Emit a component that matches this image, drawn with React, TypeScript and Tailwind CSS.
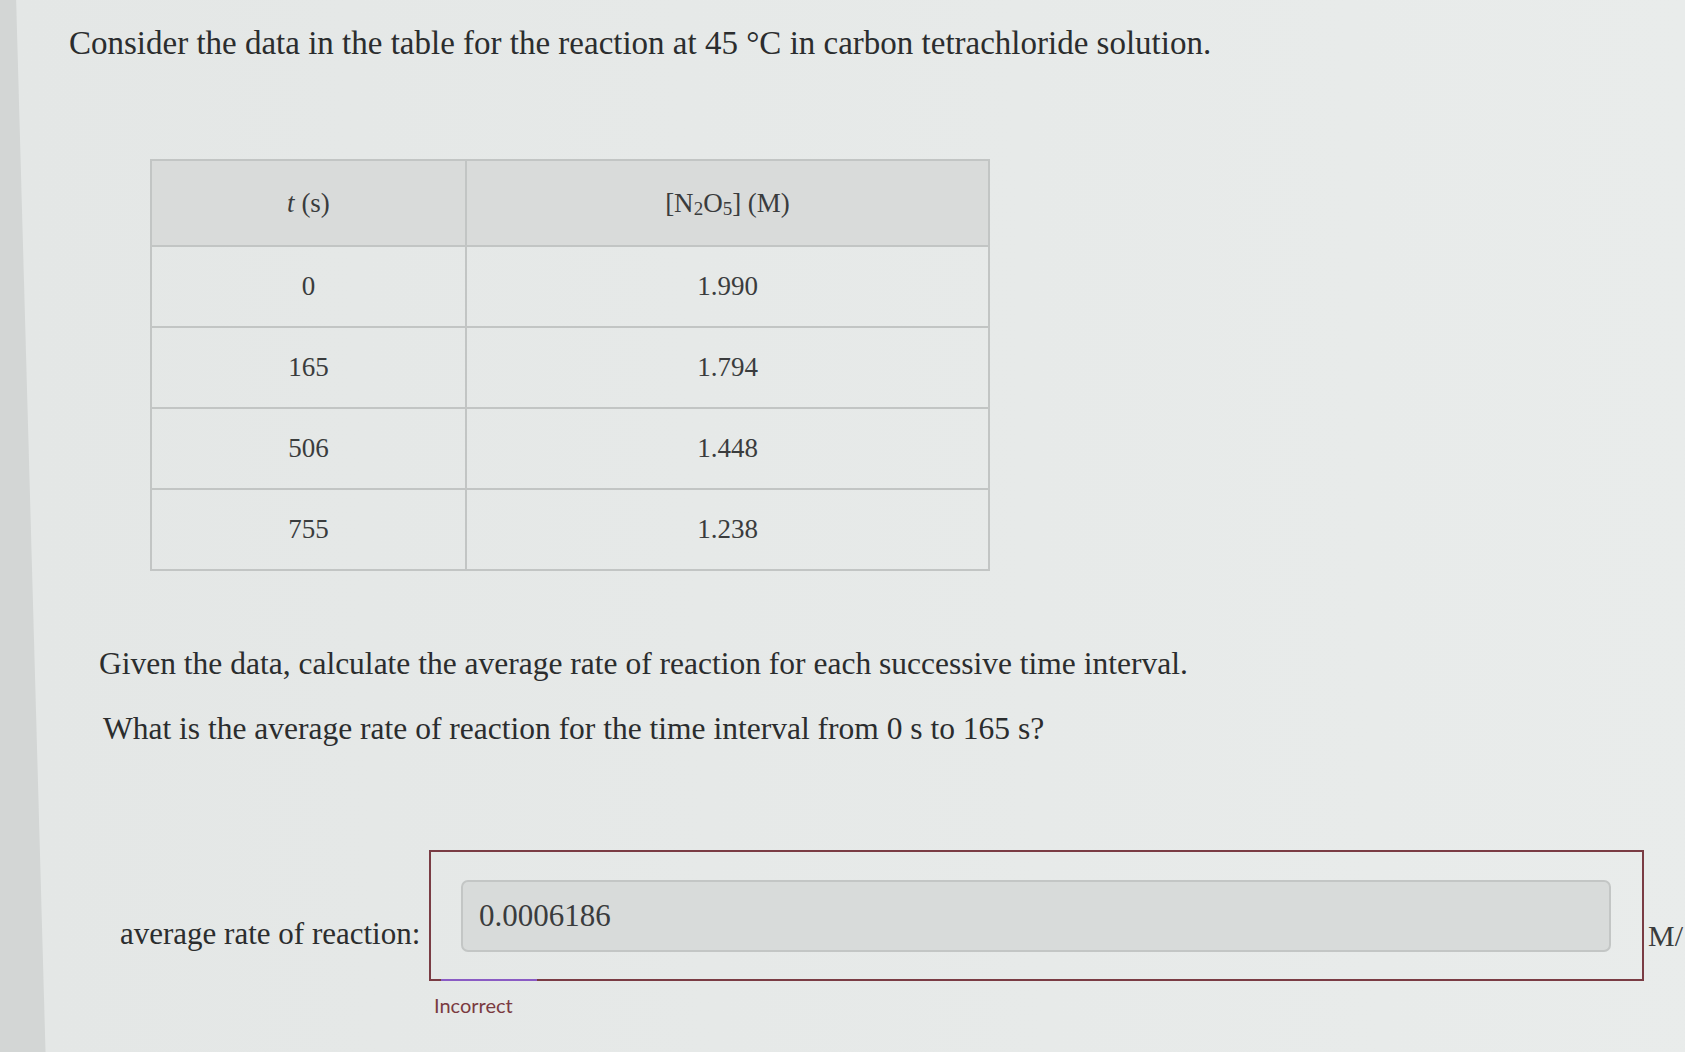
import React from 'react';

const serif = "font-['Liberation_Serif','Times_New_Roman',serif]";

const rows: [string, string][] = [
  ['0', '1.990'],
  ['165', '1.794'],
  ['506', '1.448'],
  ['755', '1.238'],
];

const App: React.FC = () => {
  return (
    <div className="w-[1685px] h-[1052px] overflow-hidden bg-[linear-gradient(88.4deg,#d3d6d5_0px,#d3d6d5_45px,#e4e7e6_46px,#e9eceb_100%)] text-[#2b2d2e]">
      <div className={`${serif} pl-[69px] pt-[23px] text-[33px] leading-[40px]`}>
        Consider the data in the table for the reaction at 45 °C in carbon tetrachloride solution.
      </div>

      <div className="ml-[150px] mt-[96px] w-[840px]">
        <table className={`${serif} w-full border-collapse text-[27px] text-[#3a3c3d]`}>
          <thead>
            <tr className="bg-[#d9dbda] h-[86px]">
              <th className="w-[315px] border-2 border-[#c2c5c4] font-normal">
                <i>t</i> (s)
              </th>
              <th className="border-2 border-[#c2c5c4] font-normal">
                [N<sub className="text-[19px] relative top-[3px]">2</sub>O<sub className="text-[19px] relative top-[3px]">5</sub>] (M)
              </th>
            </tr>
          </thead>
          <tbody>
            {rows.map(([t, c]) => (
              <tr key={t} className="h-[81px]">
                <td className="border-2 border-[#c2c5c4] text-center">{t}</td>
                <td className="border-2 border-[#c2c5c4] text-center">{c}</td>
              </tr>
            ))}
          </tbody>
        </table>
      </div>

      <div className={`${serif} text-[31.5px] leading-[36px]`}>
        <p className="pl-[99px] mt-[75px]">
          Given the data, calculate the average rate of reaction for each successive time interval.
        </p>
        <p className="pl-[103px] mt-[29px]">
          What is the average rate of reaction for the time interval from 0 s to 165 s?
        </p>
      </div>

      <div className="mt-[103px] flex items-end">
        <span className={`${serif} pl-[120px] pb-[29px] w-[429px] text-[31px] leading-[36px] text-[#2b2d2e]`}>
          average rate of reaction:
        </span>
        <div className="relative w-[1215px] h-[131px] border-2 border-[#7a3c44] pl-[30px] pt-[28px]">
          <div className={`${serif} w-[1150px] h-[72px] rounded-[7px] border-2 border-[#c3c6c5] bg-[#d8dbda] pl-[16px] flex items-center text-[31px] text-[#3a3c3d]`}>
            0.0006186
          </div>
          <div className="absolute left-[10px] bottom-[-2px] h-[2px] w-[96px] bg-[#8a5bc4]" />
        </div>
        <span className={`${serif} pl-[4px] pb-[27px] text-[30px] leading-[36px] text-[#3a3c3d]`}>M/</span>
      </div>
      <div className="pl-[434px] mt-[9px] font-['Lato','Noto_Sans',sans-serif] text-[20px] text-[#7a3a40]">
        Incorrect
      </div>
    </div>
  );
};

export default App;
